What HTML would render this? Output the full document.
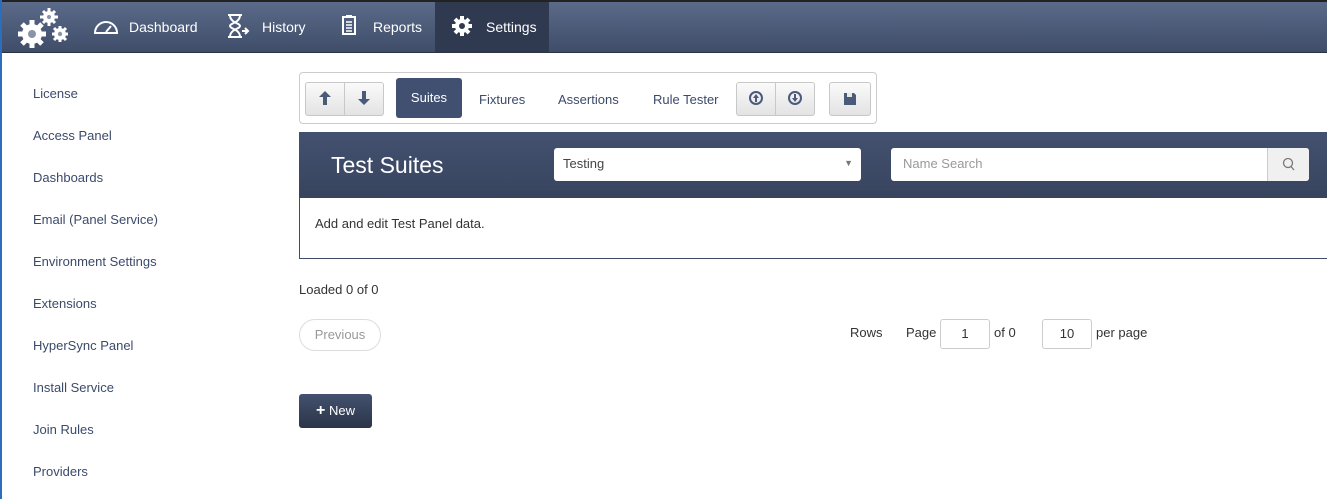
<!DOCTYPE html>
<html><head><style>
*{box-sizing:border-box;margin:0;padding:0}
body{width:1327px;height:499px;overflow:hidden;background:#fff;font-family:"Liberation Sans",sans-serif;font-size:13px;color:#333;position:relative}
.a{position:absolute}
.nav{left:0;top:0;width:1327px;height:53px;background:linear-gradient(#5a6a88,#3f4d69);border-top:2px solid #222;border-bottom:1px solid #2a3344}
.ni{color:#fff;font-size:14px;top:19px}
.side{left:33px;color:#3b4a6b;font-size:13px}
.btn{border:1px solid #c8c8c8;background:linear-gradient(#fafafa,#e3e3e3);border-radius:3px}
.tab{top:89px;font-size:13px;color:#3b4a6b}
</style></head><body>
<div class="a" style="left:0;top:0;width:2px;height:499px;background:#2a6ebd;z-index:5"></div>
<div class="a nav"></div>
<div class="a" style="left:435px;top:2px;width:114px;height:50px;background:#2f3a50"></div>
<svg class="a" style="left:15px;top:7px" width="56" height="42" viewBox="0 0 56 42">
<g fill="#fff">
<circle cx="17" cy="27" r="10"/>
<g stroke="#fff" stroke-width="5"><line x1="17" y1="13" x2="17" y2="41"/><line x1="3" y1="27" x2="31" y2="27"/><line x1="7" y1="17" x2="27" y2="37"/><line x1="27" y1="17" x2="7" y2="37"/></g>
<circle cx="34" cy="10" r="6"/>
<g stroke="#fff" stroke-width="3"><line x1="34" y1="1" x2="34" y2="19"/><line x1="25" y1="10" x2="43" y2="10"/><line x1="28" y1="4" x2="40" y2="16"/><line x1="40" y1="4" x2="28" y2="16"/></g>
<circle cx="45" cy="27" r="6"/>
<g stroke="#fff" stroke-width="3"><line x1="45" y1="19" x2="45" y2="35"/><line x1="37" y1="27" x2="53" y2="27"/><line x1="39" y1="21" x2="51" y2="33"/><line x1="51" y1="21" x2="39" y2="33"/></g>
</g>
<circle cx="17" cy="27" r="4" fill="#8a94a8"/><circle cx="34" cy="10" r="2" fill="#8a94a8"/><circle cx="45" cy="27" r="2.2" fill="#8a94a8"/>
</svg>
<svg class="a" style="left:93px;top:17px" width="26" height="18" viewBox="0 0 26 18"><path d="M2 16 A11 11 0 0 1 24 16 Z" fill="none" stroke="#fff" stroke-width="2"/><line x1="13" y1="15" x2="18" y2="9" stroke="#fff" stroke-width="2"/></svg>
<div class="a ni" style="left:129px">Dashboard</div>
<svg class="a" style="left:226px;top:14px" width="26" height="24" viewBox="0 0 26 24"><path d="M2 1h14M2 23h14M4 1c0 8 10 8 10 11s-10 3-10 11M14 1c0 8-10 8-10 11s10 3 10 11" fill="none" stroke="#fff" stroke-width="2"/><path d="M16 17h6M19 14l3 3-3 3" fill="none" stroke="#fff" stroke-width="2"/></svg>
<div class="a ni" style="left:262px">History</div>
<svg class="a" style="left:342px;top:15px" width="14" height="20" viewBox="0 0 14 20"><rect x="1" y="2" width="12" height="17" fill="none" stroke="#fff" stroke-width="2"/><rect x="4" y="0" width="6" height="3" fill="#fff"/><path d="M4 7h6M4 10h6M4 13h6M4 16h6" stroke="#fff" stroke-width="1.5"/></svg>
<div class="a ni" style="left:373px">Reports</div>
<svg class="a" style="left:451px;top:15px" width="22" height="22" viewBox="0 0 22 22"><circle cx="11" cy="11" r="7" fill="#fff"/><g stroke="#fff" stroke-width="4"><line x1="11" y1="1" x2="11" y2="21"/><line x1="1" y1="11" x2="21" y2="11"/><line x1="4" y1="4" x2="18" y2="18"/><line x1="18" y1="4" x2="4" y2="18"/></g><circle cx="11" cy="11" r="3" fill="#2f3a50"/></svg>
<div class="a ni" style="left:486px">Settings</div>

<div class="a side" style="top:86px">License</div>
<div class="a side" style="top:128px">Access Panel</div>
<div class="a side" style="top:170px">Dashboards</div>
<div class="a side" style="top:212px">Email (Panel Service)</div>
<div class="a side" style="top:254px">Environment Settings</div>
<div class="a side" style="top:296px">Extensions</div>
<div class="a side" style="top:338px">HyperSync Panel</div>
<div class="a side" style="top:380px">Install Service</div>
<div class="a side" style="top:422px">Join Rules</div>
<div class="a side" style="top:464px">Providers</div>

<div class="a" style="left:299px;top:72px;width:578px;height:52px;border:1px solid #ccc;border-radius:4px"></div>
<div class="a btn" style="left:305px;top:82px;width:79px;height:34px"></div>
<div class="a" style="left:344px;top:82px;width:1px;height:34px;background:#c8c8c8"></div>
<svg class="a" style="left:319px;top:91px" width="12" height="14" viewBox="0 0 12 14"><path d="M6 0L0 6h4v8h4V6h4z" fill="#4a5a7a"/></svg>
<svg class="a" style="left:358px;top:91px" width="12" height="14" viewBox="0 0 12 14"><path d="M6 14L0 8h4V0h4v8h4z" fill="#4a5a7a"/></svg>
<div class="a" style="left:396px;top:78px;width:66px;height:40px;background:#415070;border-radius:3px;color:#fff;text-align:center;line-height:40px">Suites</div>
<div class="a tab" style="left:479px;top:92px">Fixtures</div>
<div class="a tab" style="left:558px;top:92px">Assertions</div>
<div class="a tab" style="left:653px;top:92px">Rule Tester</div>
<div class="a btn" style="left:736px;top:82px;width:79px;height:34px"></div>
<div class="a" style="left:775px;top:82px;width:1px;height:34px;background:#c8c8c8"></div>
<svg class="a" style="left:749px;top:91px" width="14" height="14" viewBox="0 0 14 14"><circle cx="7" cy="7" r="6" fill="none" stroke="#4a5a7a" stroke-width="2"/><path d="M7 3L4 7h2v4h2V7h2z" fill="#4a5a7a"/></svg>
<svg class="a" style="left:788px;top:91px" width="14" height="14" viewBox="0 0 14 14"><circle cx="7" cy="7" r="6" fill="none" stroke="#4a5a7a" stroke-width="2"/><path d="M7 11L4 7h2V3h2v4h2z" fill="#4a5a7a"/></svg>
<div class="a btn" style="left:829px;top:82px;width:42px;height:34px"></div>
<svg class="a" style="left:844px;top:93px" width="12" height="12" viewBox="0 0 12 12"><path d="M0 0h10l2 2v10H0z" fill="#4a5a7a"/><rect x="3" y="0" width="5" height="4" fill="#e8e8e8"/></svg>

<div class="a" style="left:299px;top:132px;width:1030px;height:127px;border:1px solid #3f4d68;border-right:none"></div>
<div class="a" style="left:299px;top:132px;width:1028px;height:66px;background:linear-gradient(#435170,#38445e)"></div>
<div class="a" style="left:331px;top:152px;color:#fff;font-size:23px">Test Suites</div>
<div class="a" style="left:554px;top:148px;width:307px;height:33px;background:#fff;border-radius:3px;padding:8px 9px;color:#444">Testing<span style="position:absolute;right:8px;top:10px;font-size:9px;color:#777">▼</span></div>
<div class="a" style="left:891px;top:148px;width:418px;height:33px;background:#fff;border-radius:3px;padding:8px 12px;color:#999">Name Search</div>
<div class="a" style="left:1267px;top:148px;width:42px;height:33px;background:#f0f0f0;border-left:1px solid #ccc;border-radius:0 3px 3px 0"></div>
<svg class="a" style="left:1282px;top:157px" width="14" height="15" viewBox="0 0 14 15"><circle cx="6" cy="6" r="4.5" fill="none" stroke="#777" stroke-width="1.3"/><line x1="9" y1="9.5" x2="12" y2="13" stroke="#777" stroke-width="1.3"/></svg>
<div class="a" style="left:315px;top:216px;color:#333">Add and edit Test Panel data.</div>

<div class="a" style="left:299px;top:282px;color:#333">Loaded 0 of 0</div>
<div class="a" style="left:299px;top:319px;width:82px;height:32px;border:1px solid #ddd;border-radius:16px;color:#999;text-align:center;line-height:30px">Previous</div>
<div class="a" style="left:850px;top:325px">Rows</div>
<div class="a" style="left:906px;top:325px">Page</div>
<div class="a" style="left:940px;top:319px;width:50px;height:30px;border:1px solid #ccc;border-radius:3px;text-align:center;line-height:28px">1</div>
<div class="a" style="left:994px;top:325px">of 0</div>
<div class="a" style="left:1042px;top:319px;width:50px;height:30px;border:1px solid #ccc;border-radius:3px;text-align:center;line-height:28px">10</div>
<div class="a" style="left:1096px;top:325px">per page</div>
<div class="a" style="left:299px;top:394px;width:73px;height:34px;background:linear-gradient(#44526f,#2b3447);border-radius:3px;color:#fff;text-align:center;line-height:34px"><b style="font-size:16px">+</b> New</div>
</body></html>
